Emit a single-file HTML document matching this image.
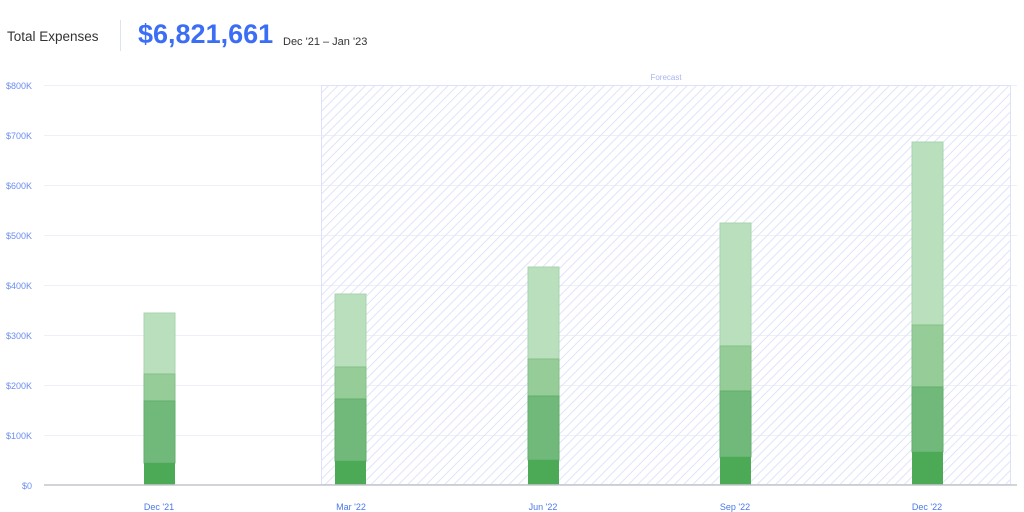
<!DOCTYPE html>
<html><head><style>
body{margin:0;width:1024px;height:512px;background:#fff;font-family:"Liberation Sans",sans-serif;overflow:hidden;position:relative}
.t{position:absolute;left:7px;top:29px;font-size:13.5px;color:#333}
.sep{position:absolute;left:120px;top:20px;width:1px;height:31px;background:#dde3f0}
.big{position:absolute;left:138px;top:19px;font-size:27px;font-weight:bold;color:#3b6ef5}
.rng{position:absolute;left:283px;top:36px;font-size:11px;color:#333}
</style></head><body>
<div class="t">Total Expenses</div><div class="sep"></div>
<div class="big">$6,821,661</div><div class="rng">Dec '21 – Jan '23</div>
<svg width="1024" height="512" style="position:absolute;left:0;top:0">
<defs><pattern id="h" width="6.5" height="6.5" patternUnits="userSpaceOnUse" patternTransform="rotate(45)"><line x1="0" y1="0" x2="0" y2="6.5" stroke="#dfe3fb" stroke-width="2"/></pattern></defs>
<g stroke="#eef0f8" stroke-width="1">
<line x1="44" y1="85.5" x2="1017" y2="85.5"/><line x1="44" y1="135.5" x2="1017" y2="135.5"/><line x1="44" y1="185.5" x2="1017" y2="185.5"/><line x1="44" y1="235.5" x2="1017" y2="235.5"/><line x1="44" y1="285.5" x2="1017" y2="285.5"/><line x1="44" y1="335.5" x2="1017" y2="335.5"/><line x1="44" y1="385.5" x2="1017" y2="385.5"/><line x1="44" y1="435.5" x2="1017" y2="435.5"/>
</g>
<rect x="321.5" y="85.5" width="689" height="399" fill="url(#h)" stroke="#dde1fb"/>
<text x="666" y="80" font-size="8" fill="#aab4f0" text-anchor="middle">Forecast</text>
<g font-size="9" fill="#6b8ef0" text-anchor="end">
<text x="32" y="89">$800K</text><text x="32" y="139">$700K</text><text x="32" y="189">$600K</text><text x="32" y="239">$500K</text><text x="32" y="289">$400K</text><text x="32" y="339">$300K</text><text x="32" y="389">$200K</text><text x="32" y="439">$100K</text><text x="32" y="489">$0</text>
</g>
<g font-size="9" fill="#4a78e8" text-anchor="middle">
<text x="159" y="510">Dec '21</text><text x="351" y="510">Mar '22</text><text x="543" y="510">Jun '22</text><text x="735" y="510">Sep '22</text><text x="927" y="510">Dec '22</text>
</g>
<g stroke-width="1">
<rect x="144" y="313" width="31" height="61" fill="#b9dfbd" stroke="#a8d5ad"/><rect x="144" y="374" width="31" height="27" fill="#95cc97" stroke="#85c088"/><rect x="144" y="401" width="31" height="62" fill="#70b97a" stroke="#62ae6c"/><rect x="144" y="463" width="31" height="22" fill="#4caa57"/>
<rect x="335" y="294" width="31" height="73" fill="#b9dfbd" stroke="#a8d5ad"/><rect x="335" y="367" width="31" height="32" fill="#95cc97" stroke="#85c088"/><rect x="335" y="399" width="31" height="62" fill="#70b97a" stroke="#62ae6c"/><rect x="335" y="461" width="31" height="24" fill="#4caa57"/>
<rect x="528" y="267" width="31" height="92" fill="#b9dfbd" stroke="#a8d5ad"/><rect x="528" y="359" width="31" height="37" fill="#95cc97" stroke="#85c088"/><rect x="528" y="396" width="31" height="64" fill="#70b97a" stroke="#62ae6c"/><rect x="528" y="460" width="31" height="25" fill="#4caa57"/>
<rect x="720" y="223" width="31" height="123" fill="#b9dfbd" stroke="#a8d5ad"/><rect x="720" y="346" width="31" height="45" fill="#95cc97" stroke="#85c088"/><rect x="720" y="391" width="31" height="66" fill="#70b97a" stroke="#62ae6c"/><rect x="720" y="457" width="31" height="28" fill="#4caa57"/>
<rect x="912" y="142" width="31" height="183" fill="#b9dfbd" stroke="#a8d5ad"/><rect x="912" y="325" width="31" height="62" fill="#95cc97" stroke="#85c088"/><rect x="912" y="387" width="31" height="65" fill="#70b97a" stroke="#62ae6c"/><rect x="912" y="452" width="31" height="33" fill="#4caa57"/>
</g>
<line x1="44" y1="485" x2="1017" y2="485" stroke="#c4c6cc" stroke-width="1.5"/>
</svg>
</body></html>
